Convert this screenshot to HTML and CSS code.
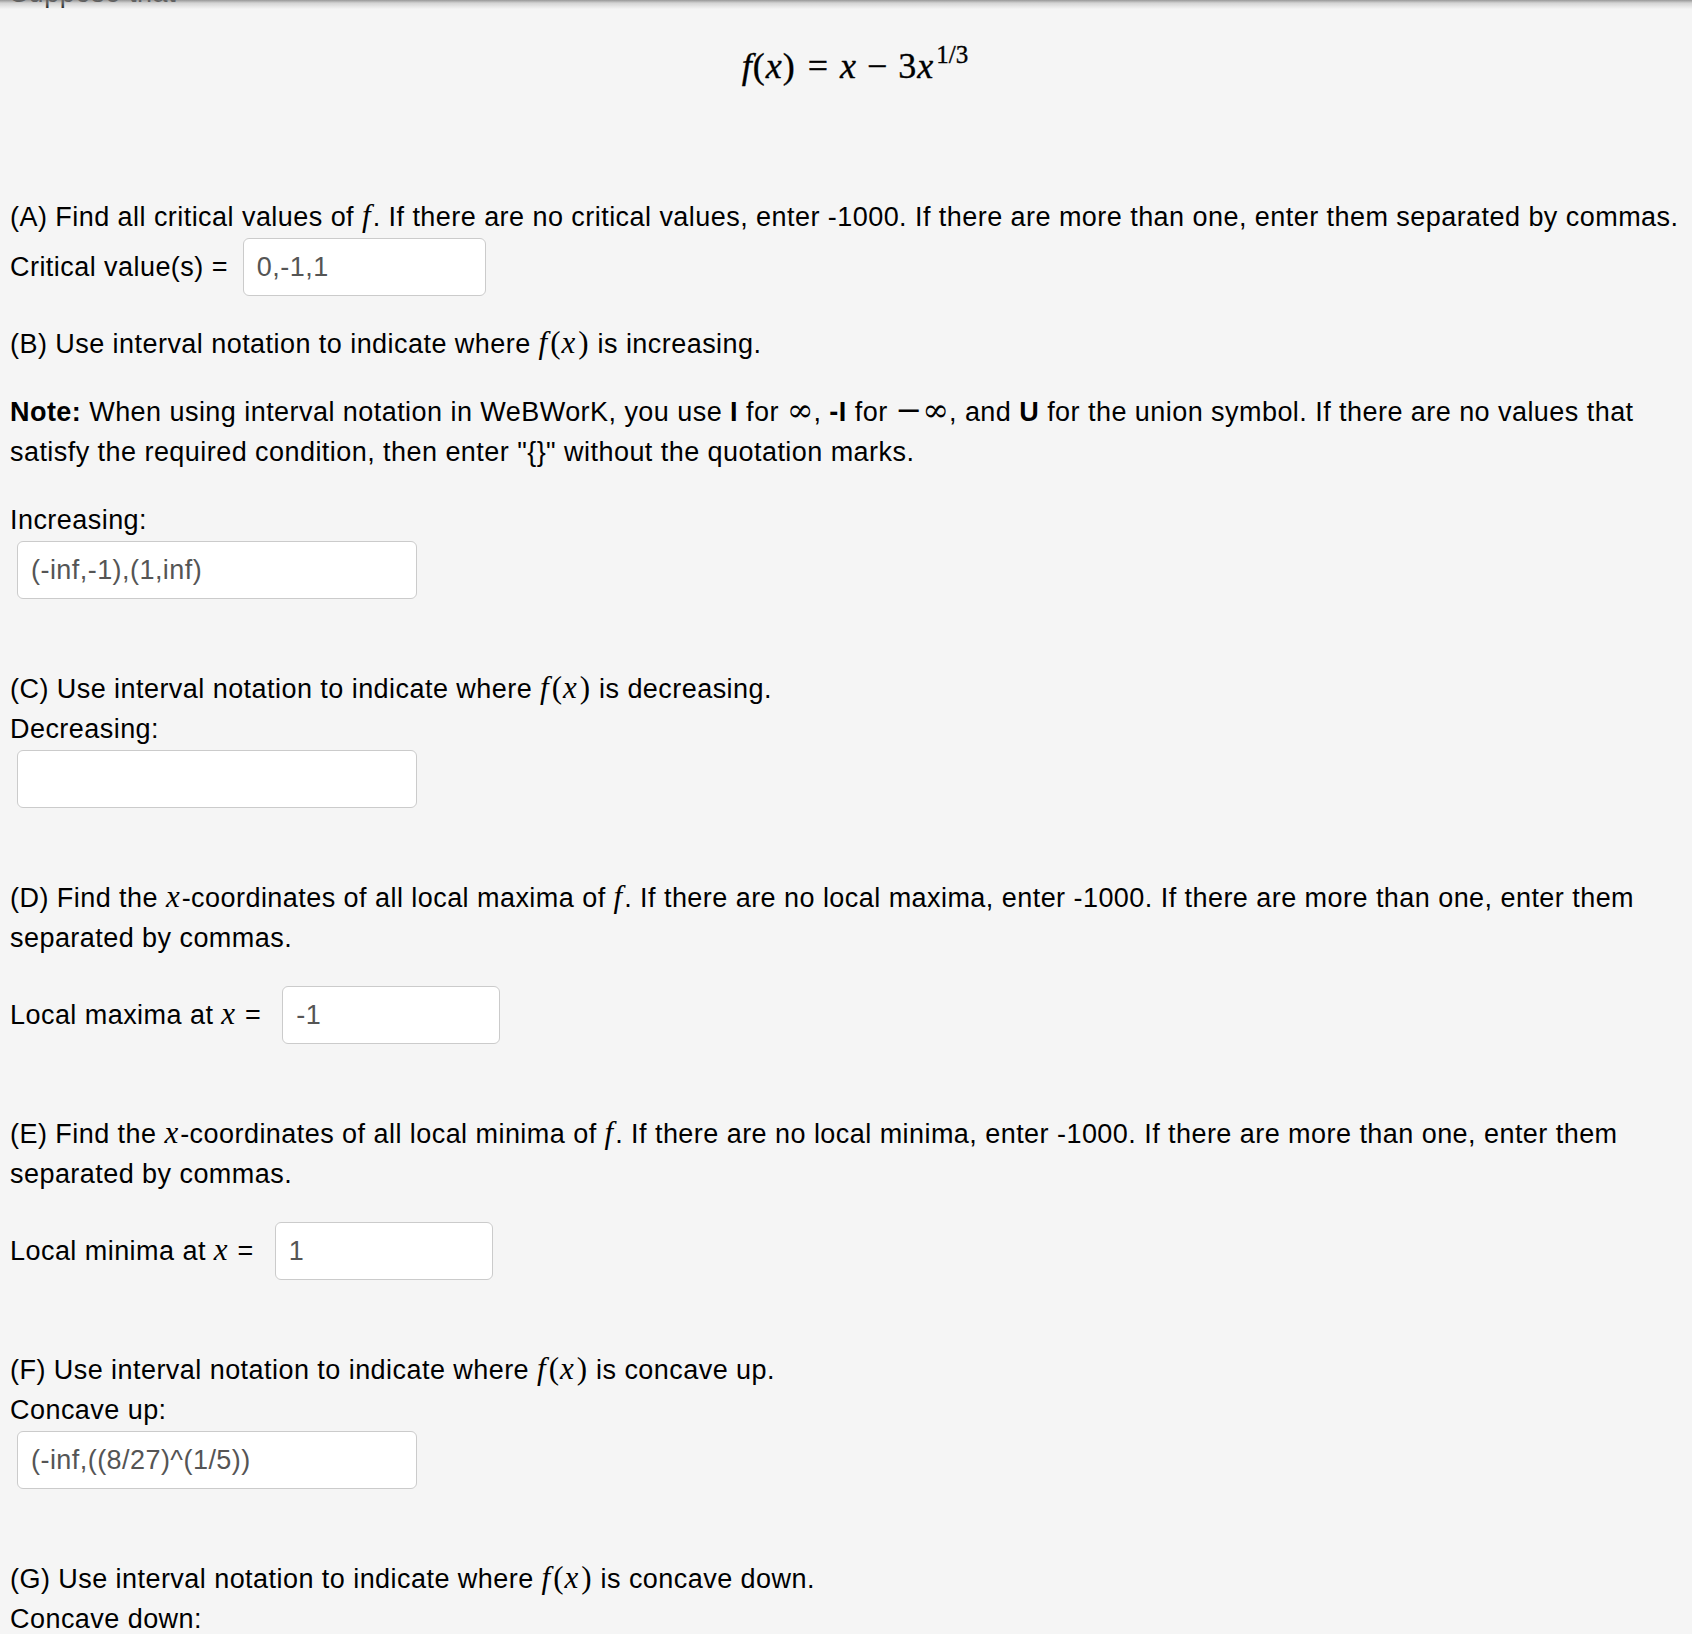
FILE: index.html
```html
<!DOCTYPE html>
<html>
<head>
<meta charset="utf-8">
<link rel="stylesheet" href="styles.css">
</head>
<body>
<div class="top-shadow"></div>
<div class="page">
  <div class="line intro">Suppose that</div>
  <div class="formula">
    <span class="mi">f</span><span class="mo paren">(</span><span class="mi">x</span><span class="mo paren">)</span><span class="mo rel">=</span><span class="mi">x</span><span class="mo bin">−</span><span class="mn">3</span><span class="mi">x</span><sup class="msup">1/3</sup>
  </div>

  <div class="line part-first">(A) Find all critical values of <span class="m"><span class="mi">f</span></span>. If there are no critical values, enter -1000. If there are more than one, enter them separated by commas.</div>
  <div class="row">
    <span class="label">Critical value(s) =</span>
    <span class="field w-a">0,-1,1</span>
  </div>

  <div class="line part-gap">(B) Use interval notation to indicate where <span class="m"><span class="mi">f</span><span class="mo">(</span><span class="mi">x</span><span class="mo">)</span></span> is increasing.</div>
  <p class="note"><b>Note:</b> When using interval notation in WeBWorK, you use <b>I</b> for <span class="inf">∞</span>, <b>-I</b> for <span class="inf">−∞</span>, and <b>U</b> for the union symbol. If there are no values that satisfy the required condition, then enter "{}" without the quotation marks.</p>
  <div class="line part-gap">Increasing:</div>
  <div class="field w-b indent">(-inf,-1),(1,inf)</div>

  <div class="line part-big">(C) Use interval notation to indicate where <span class="m"><span class="mi">f</span><span class="mo">(</span><span class="mi">x</span><span class="mo">)</span></span> is decreasing.</div>
  <div class="line">Decreasing:</div>
  <div class="field w-b indent"></div>

  <div class="line part-big">(D) Find the <span class="m"><span class="mi">x</span></span>-coordinates of all local maxima of <span class="m"><span class="mi">f</span></span>. If there are no local maxima, enter -1000. If there are more than one, enter them separated by commas.</div>
  <div class="row part-gap">
    <span class="label x-label">Local maxima at <span class="m"><span class="mi">x</span></span> =</span>
    <span class="field w-d">-1</span>
  </div>

  <div class="line part-big">(E) Find the <span class="m"><span class="mi">x</span></span>-coordinates of all local minima of <span class="m"><span class="mi">f</span></span>. If there are no local minima, enter -1000. If there are more than one, enter them separated by commas.</div>
  <div class="row part-gap">
    <span class="label x-label">Local minima at <span class="m"><span class="mi">x</span></span> =</span>
    <span class="field w-d">1</span>
  </div>

  <div class="line part-big">(F) Use interval notation to indicate where <span class="m"><span class="mi">f</span><span class="mo">(</span><span class="mi">x</span><span class="mo">)</span></span> is concave up.</div>
  <div class="line">Concave up:</div>
  <div class="field w-b indent">(-inf,((8/27)^(1/5))</div>

  <div class="line part-big">(G) Use interval notation to indicate where <span class="m"><span class="mi">f</span><span class="mo">(</span><span class="mi">x</span><span class="mo">)</span></span> is concave down.</div>
  <div class="line">Concave down:</div>
</div>
</body>
</html>
```

FILE: styles.css
```css
html, body {
  margin: 0;
  padding: 0;
  background: #f5f5f5;
}
body {
  font-family: "Liberation Sans", Arial, Helvetica, sans-serif;
  font-size: 27px;
  letter-spacing: 0.45px;
  line-height: 40px;
  color: #000;
  overflow: hidden;
}
.top-shadow {
  position: fixed;
  left: 0;
  right: 0;
  top: 0;
  height: 9px;
  background: linear-gradient(to bottom, rgba(120,120,120,0.75) 0px, rgba(170,170,170,0.45) 3px, rgba(245,245,245,0) 9px);
  z-index: 5;
}
.page {
  padding: 0 4px 0 10px;
}
.line {
  margin: 0;
}
.intro {
  margin-top: -27px;
  color: #222;
  letter-spacing: 0.6px;
}
.formula {
  text-align: center;
  font-family: "Liberation Serif", "Times New Roman", serif;
  font-size: 36px;
  letter-spacing: 0;
  line-height: 40px;
  margin-top: 33px;
  padding-left: 12px;
  -webkit-text-stroke: 0.35px #000;
}
.formula .mi {
  font-style: italic;
}
.formula .paren {
  margin: 0 1px;
}
.formula .rel {
  margin: 0 12px;
}
.formula .bin {
  margin: 0 11px;
}
.formula .mn {
  margin-right: 1px;
}
.formula .msup {
  font-size: 25px;
  line-height: 0;
  vertical-align: 15px;
  margin-left: 3px;
}
.m {
  font-family: "Liberation Serif", "Times New Roman", serif;
  font-size: 31px;
  line-height: 0;
  letter-spacing: 0;
}
.m .mi {
  font-style: italic;
  margin-right: 2px;
}
.m .mo {
  margin: 0 1px;
}
.inf {
  font-family: "DejaVu Serif", "Liberation Serif", serif;
  font-size: 32px;
  line-height: 0;
  letter-spacing: 0;
}
.part-first {
  margin-top: 111px;
}
.part-gap {
  margin-top: 28px;
}
.part-big {
  margin-top: 70px;
}
.note {
  margin: 28px 0 0 0;
}
.row {
  display: flex;
  align-items: center;
  margin-top: 1px;
}
.row.part-gap {
  margin-top: 28px;
}
.label {
  margin-right: 15px;
}
.label.x-label {
  margin-right: 21px;
}
.field {
  display: block;
  box-sizing: border-box;
  height: 58px;
  line-height: 56px;
  background: #fff;
  border: 1px solid #cbcbcb;
  border-radius: 6px;
  color: #555;
  padding-left: 13px;
  font-size: 27px;
}
.w-a { width: 243px; }
.w-b { width: 400px; }
.w-d { width: 218px; }
.indent {
  margin-left: 7px;
  margin-top: 1px;
}
```
